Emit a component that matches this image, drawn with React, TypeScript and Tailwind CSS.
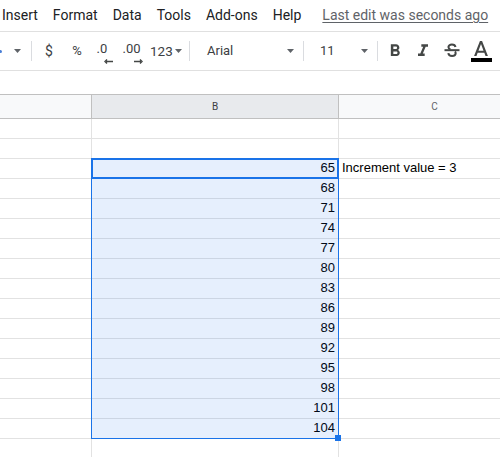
const MENU = ["Insert", "Format", "Data", "Tools", "Add-ons", "Help"];

const VALUES: (number | null)[] = [null, null, 65, 68, 71, 74, 77, 80, 83, 86, 89, 92, 95, 98, 101, 104, null];

function Caret() {
  return (
    <svg width="7" height="4" viewBox="0 0 7 4" className="shrink-0">
      <polygon points="0,0 7,0 3.5,4" fill="#5f6368" />
    </svg>
  );
}

function Sep() {
  return (
    <div className="flex h-full w-[5px] shrink-0 items-center justify-center">
      <div className="h-[20px] w-px bg-[#dadce0]" />
    </div>
  );
}

function DecimalIcon({ label, dir }: { label: string; dir: "left" | "right" }) {
  return (
    <div className="relative flex h-[26px] flex-col items-start">
      <span className="leading-[22px]">{label}</span>
      <svg
        width="9"
        height="5"
        viewBox="0 0 9 5"
        className={dir === "left" ? "ml-[7px] -mt-[1px]" : "ml-[11px] -mt-[1px]"}
      >
        {dir === "left" ? (
          <path d="M9 2.5H2M3 0.5L1 2.5L3 4.5" stroke="#444746" strokeWidth="1.4" fill="none" />
        ) : (
          <path d="M0 2.5H7M6 0.5L8 2.5L6 4.5" stroke="#444746" strokeWidth="1.4" fill="none" />
        )}
      </svg>
    </div>
  );
}

function MenuBar() {
  return (
    <div className="flex h-[32px] items-start gap-[15px] border-b border-[#e0e0e0] pl-[2px] pt-[5px] font-['Roboto',sans-serif] text-[14px] leading-[20px] text-[#202124]">
      {MENU.map((m) => (
        <span key={m} className="shrink-0">
          {m}
        </span>
      ))}
      <span className="ml-[6px] shrink-0 text-[#5f6368] underline underline-offset-[2px]">
        Last edit was seconds ago
      </span>
    </div>
  );
}

function Toolbar() {
  return (
    <div className="flex h-[39px] items-center border-b border-[#e0e0e0] font-['Roboto',sans-serif] text-[13px] text-[#3c4043]">
      <div className="flex w-[6px] shrink-0 items-center">
        <div className="h-[3px] w-[2px] rounded-r-full bg-[#4a7fd6]" />
      </div>
      <div className="flex w-[23px] shrink-0 justify-center">
        <Caret />
      </div>
      <Sep />
      <div className="w-[30px] shrink-0 text-center text-[14px]">$</div>
      <div className="w-[26px] shrink-0 text-center text-[13px]">%</div>
      <div className="flex w-[28px] shrink-0 justify-center pl-[1px]">
        <DecimalIcon label=".0" dir="left" />
      </div>
      <div className="flex w-[29px] shrink-0 justify-center">
        <DecimalIcon label=".00" dir="right" />
      </div>
      <div className="flex w-[40px] shrink-0 items-center gap-[2px] pl-[3px]">
        <span className="text-[13.5px]">123</span>
        <Caret />
      </div>
      <Sep />
      <div className="flex w-[109px] shrink-0 items-center justify-between pl-[15px] pr-[7px]">
        <span>Arial</span>
        <Caret />
      </div>
      <Sep />
      <div className="flex w-[69px] shrink-0 items-center justify-between pl-[14px] pr-[7px]">
        <span>11</span>
        <Caret />
      </div>
      <Sep />
      <div className="flex w-[30px] shrink-0 justify-center">
        <svg width="20" height="20" viewBox="0 0 24 24">
          <path
            fill="#444746"
            d="M15.6 10.79c.97-.67 1.65-1.77 1.65-2.79 0-2.26-1.75-4-4-4H7v14h7.04c2.09 0 3.71-1.7 3.71-3.79 0-1.52-.86-2.82-2.15-3.42zM10 6.5h3c.83 0 1.5.67 1.5 1.5s-.67 1.5-1.5 1.5h-3v-3zm3.5 9H10v-3h3.5c.83 0 1.5.67 1.5 1.5s-.67 1.5-1.5 1.5z"
          />
        </svg>
      </div>
      <div className="flex w-[26px] shrink-0 justify-center">
        <svg width="20" height="20" viewBox="0 0 24 24">
          <path fill="#444746" d="M10 4v3h2.21l-3.42 8H6v3h8v-3h-2.21l3.42-8H18V4z" />
        </svg>
      </div>
      <div className="flex w-[32px] shrink-0 justify-center">
        <svg width="20" height="20" viewBox="0 0 24 24" fill="none" stroke="#444746" strokeWidth="2.4">
          <path d="M16.2 7.2c-.3-1.9-2-3-4.3-3-2.5 0-4.2 1.3-4.2 3.1 0 1.4.9 2.2 2.4 2.7" />
          <path d="M3 11h18" />
          <path d="M7.6 14.6c.2 2 1.9 3.3 4.5 3.3 2.6 0 4.3-1.3 4.3-3.2 0-.9-.3-1.6-.9-2.1" />
        </svg>
      </div>
      <div className="flex w-[26px] shrink-0 flex-col items-center">
        <svg width="18" height="16" viewBox="4 2 16 15">
          <path fill="#444746" d="M11 3L5.5 17h2.25l1.12-3h6.25l1.12 3h2.25L13 3h-2zm-1.38 9L12 5.67 14.38 12H9.62z" />
        </svg>
        <div className="mt-[2px] h-[4px] w-[21px] bg-black" />
      </div>
    </div>
  );
}

function HeaderRow() {
  return (
    <div className="flex h-[25px] border-y border-[#c0c0c0] font-['Roboto',sans-serif] text-[10px] leading-[23px]">
      <div className="w-[92px] shrink-0 border-r border-[#c0c0c0] bg-[#f8f9fa]" />
      <div className="w-[247px] shrink-0 border-r border-[#c0c0c0] bg-[#e8eaed] text-center text-[#3c4043]">B</div>
      <div className="w-[192px] shrink-0 border-r border-[#c0c0c0] bg-[#f8f9fa] text-center text-[#5f6368]">C</div>
      <div className="w-[100px] shrink-0 bg-[#f8f9fa]" />
    </div>
  );
}

function Row({ value, note }: { value: number | null; note?: string }) {
  return (
    <div className="flex h-[20px] shrink-0 font-['Liberation_Sans',Arial,sans-serif] text-[13px] leading-[17px] text-black">
      <div className="w-[92px] shrink-0 border-b border-r border-[#e2e2e2]" />
      <div className="w-[247px] shrink-0 border-b border-r border-[#e2e2e2] pr-[3px] text-right">
        {value ?? ""}
      </div>
      <div className="w-[192px] shrink-0 border-b border-r border-[#e2e2e2] pl-[3px] whitespace-nowrap">
        {note ?? ""}
      </div>
      <div className="w-[100px] shrink-0 border-b border-[#e2e2e2]" />
    </div>
  );
}

function Grid() {
  return (
    <div className="relative flex flex-col">
      <HeaderRow />
      {VALUES.map((v, i) => (
        <Row key={i} value={v} note={i === 2 ? "Increment value = 3" : undefined} />
      ))}
      {/* range selection B3:B16 */}
      <div className="pointer-events-none absolute left-[91px] top-[64px] h-[281px] w-[248px] border border-[#1a73e8] bg-[rgba(14,101,235,0.1)]" />
      {/* active cell */}
      <div className="pointer-events-none absolute left-[91px] top-[64px] h-[21px] w-[248px] border-2 border-[#1a73e8]" />
      {/* fill handle */}
      <div className="absolute left-[335px] top-[341px] h-[6px] w-[6px] bg-[#1a73e8]" />
    </div>
  );
}

export default function App() {
  return (
    <div className="h-[457px] w-[500px] overflow-hidden bg-white">
      <MenuBar />
      <Toolbar />
      <div className="h-[23px]" />
      <Grid />
    </div>
  );
}
